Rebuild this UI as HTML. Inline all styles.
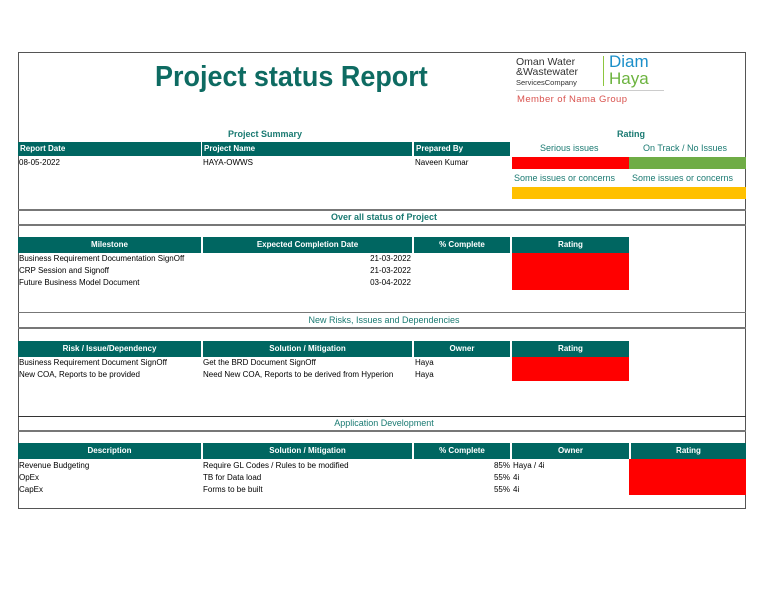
<!DOCTYPE html>
<html><head><meta charset="utf-8"><style>
body{margin:0;width:768px;height:594px;background:#fff;position:relative;font-family:"Liberation Sans",sans-serif;overflow:hidden}
div{position:absolute;box-sizing:border-box}
.h{background:#006661;color:#fff;font-size:8px;line-height:16px;text-align:center;font-weight:bold;white-space:nowrap}
.hl{text-align:left;padding-left:2px;line-height:14px}
.t{font-size:8px;color:#000;white-space:nowrap;line-height:12px}
.g{color:#1a7a72;font-size:9px;font-weight:bold;white-space:nowrap}
.red{background:#ff0000}
.ln{height:2px;background:#777;left:18px;width:728px}
</style></head><body>
<div style="left:18px;top:52px;width:728px;height:457px;border:1px solid #555"></div>
<div style="left:155px;top:61px;width:272px;font-size:29px;font-weight:bold;color:#0e6b62;white-space:nowrap;transform:scaleX(0.93);transform-origin:left">Project status Report</div>
<div style="left:516px;top:57px;font-size:10.5px;line-height:10px;color:#333;white-space:nowrap">Oman Water<br>&amp;Wastewater<br><span style="font-size:7.5px">ServicesCompany</span></div>
<div style="left:603px;top:56px;width:1px;height:30px;background:#8dc63f"></div>
<div style="left:609px;top:53px;font-size:17px;line-height:17px;color:#1b8fc9">Diam<br><span style="color:#6cb33f">Haya</span></div>
<div style="left:516px;top:90px;width:148px;height:1px;background:#ccc"></div>
<div style="left:517px;top:94px;font-size:9.5px;color:#d9534f;white-space:nowrap;letter-spacing:0.4px">Member of Nama Group</div>
<div class="g" style="left:228px;top:129px">Project Summary</div>
<div class="g" style="left:617px;top:129px">Rating</div>
<div class="h hl" style="left:18px;top:142px;width:183px">Report Date</div>
<div class="h hl" style="left:202px;top:142px;width:210px">Project Name</div>
<div class="h hl" style="left:414px;top:142px;width:96px">Prepared By</div>
<div class="g" style="left:540px;top:143px;font-weight:normal">Serious issues</div>
<div class="g" style="left:643px;top:143px;font-weight:normal">On Track / No Issues</div>
<div class="t" style="left:19px;top:157px">08-05-2022</div>
<div class="t" style="left:203px;top:157px">HAYA-OWWS</div>
<div class="t" style="left:415px;top:157px">Naveen Kumar</div>
<div class="red" style="left:512px;top:157px;width:117px;height:12px"></div>
<div style="left:629px;top:157px;width:117px;height:12px;background:#6fac46"></div>
<div class="g" style="left:514px;top:173px;font-weight:normal">Some issues or concerns</div>
<div class="g" style="left:632px;top:173px;font-weight:normal">Some issues or concerns</div>
<div style="left:512px;top:187px;width:234px;height:12px;background:#ffc000"></div>
<div class="ln" style="top:209px"></div>
<div class="g" style="left:0;width:768px;text-align:center;top:212px">Over all status of Project</div>
<div class="ln" style="top:224px"></div>
<div class="h" style="left:18px;top:237px;width:183px">Milestone</div>
<div class="h" style="left:203px;top:237px;width:209px">Expected Completion Date</div>
<div class="h" style="left:414px;top:237px;width:96px">% Complete</div>
<div class="h" style="left:512px;top:237px;width:117px">Rating</div>
<div class="t" style="left:19px;top:253px">Business Requirement Documentation SignOff</div>
<div class="t" style="left:19px;top:265px">CRP Session and Signoff</div>
<div class="t" style="left:19px;top:277px">Future Business Model Document</div>
<div class="t" style="left:203px;top:253px;width:208px;text-align:right">21-03-2022</div>
<div class="t" style="left:203px;top:265px;width:208px;text-align:right">21-03-2022</div>
<div class="t" style="left:203px;top:277px;width:208px;text-align:right">03-04-2022</div>
<div class="red" style="left:512px;top:253px;width:117px;height:37px"></div>
<div class="ln" style="top:312px;height:1px"></div>
<div class="g" style="left:0;width:768px;text-align:center;top:315px;font-weight:normal">New Risks, Issues and Dependencies</div>
<div class="ln" style="top:327px"></div>
<div class="h" style="left:18px;top:341px;width:183px">Risk / Issue/Dependency</div>
<div class="h" style="left:203px;top:341px;width:209px">Solution / Mitigation</div>
<div class="h" style="left:414px;top:341px;width:96px">Owner</div>
<div class="h" style="left:512px;top:341px;width:117px">Rating</div>
<div class="t" style="left:19px;top:357px">Business Requirement Document SignOff</div>
<div class="t" style="left:19px;top:369px">New COA, Reports to be provided</div>
<div class="t" style="left:203px;top:357px">Get the BRD Document SignOff</div>
<div class="t" style="left:203px;top:369px">Need New COA, Reports to be derived from Hyperion</div>
<div class="t" style="left:415px;top:357px">Haya</div>
<div class="t" style="left:415px;top:369px">Haya</div>
<div class="red" style="left:512px;top:357px;width:117px;height:24px"></div>
<div class="ln" style="top:416px;height:1px;background:#333"></div>
<div class="g" style="left:0;width:768px;text-align:center;top:418px;font-weight:normal">Application Development</div>
<div class="ln" style="top:430px"></div>
<div class="h" style="left:18px;top:443px;width:183px">Description</div>
<div class="h" style="left:203px;top:443px;width:209px">Solution / Mitigation</div>
<div class="h" style="left:414px;top:443px;width:96px">% Complete</div>
<div class="h" style="left:512px;top:443px;width:117px">Owner</div>
<div class="h" style="left:631px;top:443px;width:115px">Rating</div>
<div class="t" style="left:19px;top:460px">Revenue Budgeting</div>
<div class="t" style="left:19px;top:472px">OpEx</div>
<div class="t" style="left:19px;top:484px">CapEx</div>
<div class="t" style="left:203px;top:460px">Require GL Codes / Rules to be modified</div>
<div class="t" style="left:203px;top:472px">TB for Data load</div>
<div class="t" style="left:203px;top:484px">Forms to be built</div>
<div class="t" style="left:414px;top:460px;width:96px;text-align:right">85%</div>
<div class="t" style="left:414px;top:472px;width:96px;text-align:right">55%</div>
<div class="t" style="left:414px;top:484px;width:96px;text-align:right">55%</div>
<div class="t" style="left:513px;top:460px">Haya / 4i</div>
<div class="t" style="left:513px;top:472px">4i</div>
<div class="t" style="left:513px;top:484px">4i</div>
<div class="red" style="left:629px;top:459px;width:117px;height:36px"></div>
</body></html>
